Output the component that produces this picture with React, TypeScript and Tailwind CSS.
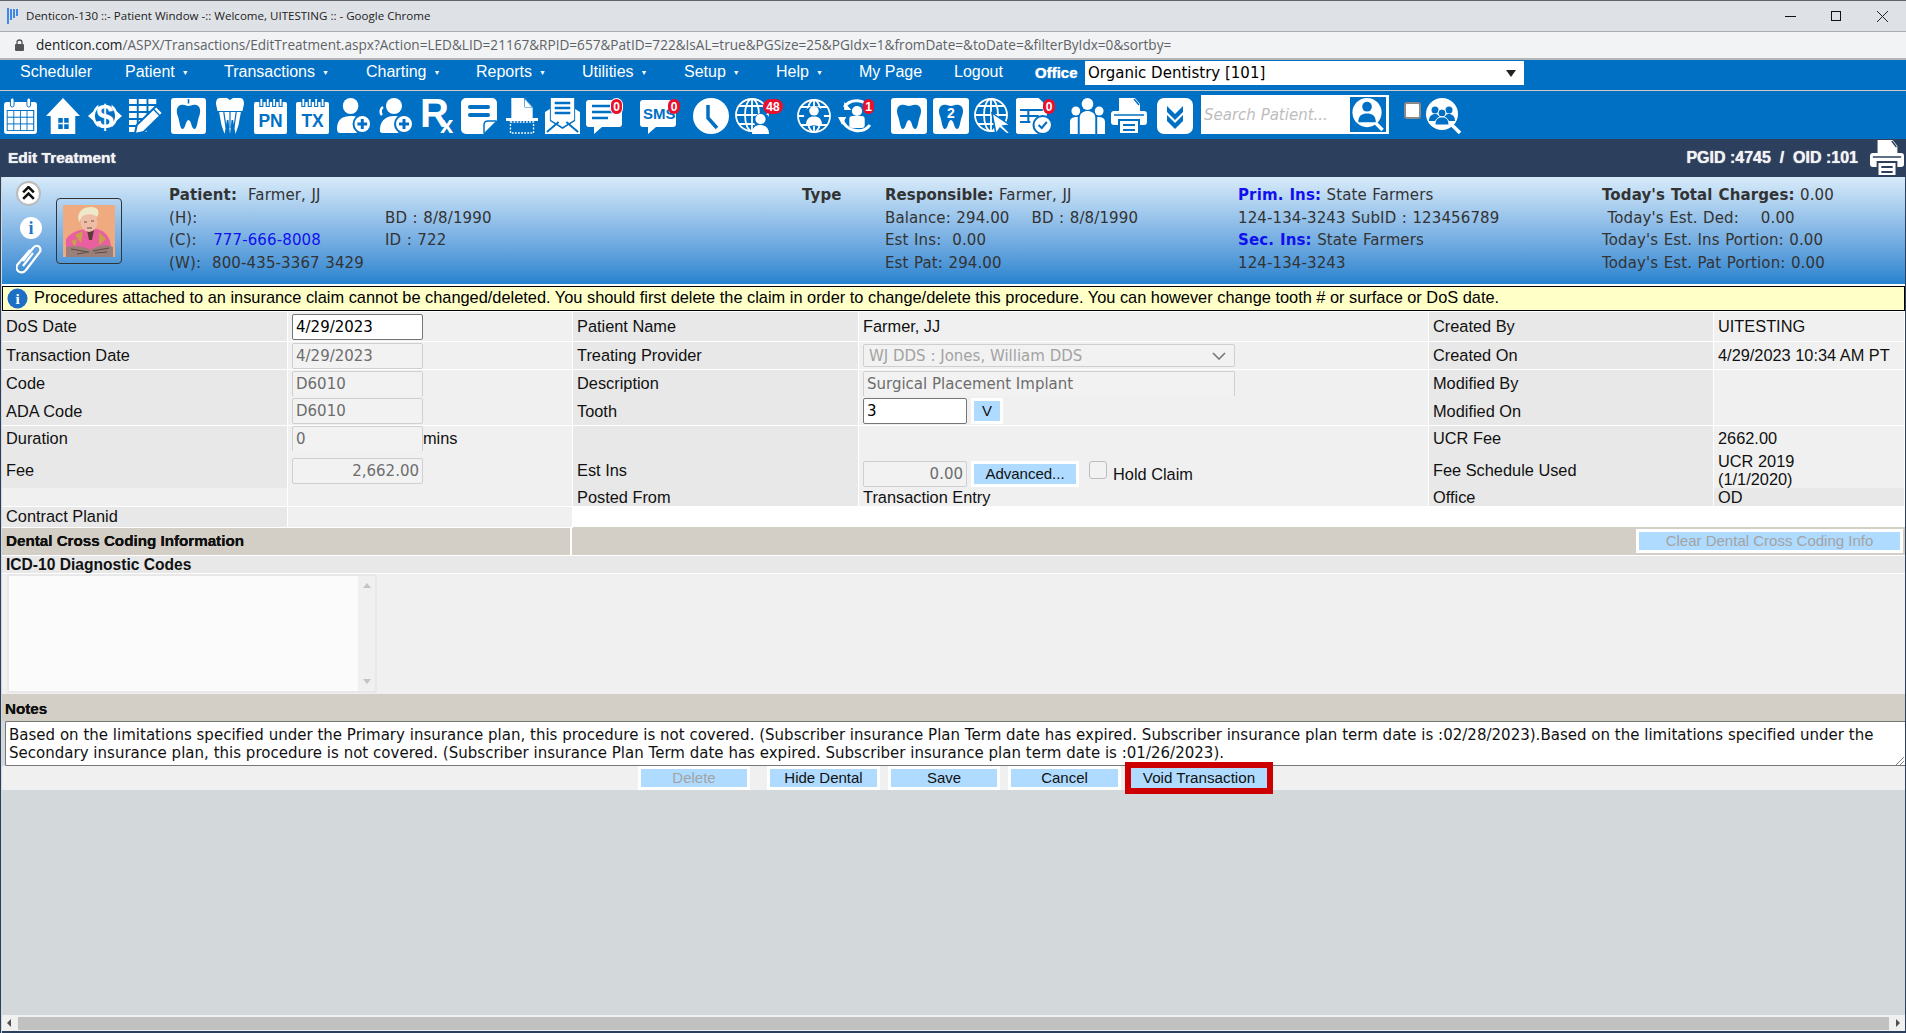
import React from "react";

const B = "#0070c5";
const W = "#ffffff";

function Ic({ className, children }: { className: string; children: React.ReactNode }) {
  return (
    <svg viewBox="0 0 36 36" preserveAspectRatio="none" className={"block h-[36px] shrink-0 " + className}>
      {children}
    </svg>
  );
}

function Badge({ children, className }: { children: React.ReactNode; className: string }) {
  return (
    <span className={"absolute top-[1px] flex h-[15px] items-center justify-center rounded-full bg-[#e8112d] text-[12px] font-bold leading-none text-white " + className}>
      {children}
    </span>
  );
}

const toothPath = "M10 7C14 6 16 8 18 8C20 8 22 6 26 7C30 8 31 13 29 18C27 23 27 31 24 31C21 31 21 22 18 22C15 22 15 31 12 31C9 31 9 23 7 18C5 13 6 8 10 7Z";
const bubble = "M3 2H33a3 3 0 0 1 3 3V26a3 3 0 0 1-3 3H16L8 36V29H3a3 3 0 0 1-3-3V5a3 3 0 0 1 3-3Z";

function GlobeLines() {
  return (
    <g fill="none" stroke={W} strokeWidth="1.8">
      <circle cx="17" cy="17" r="16" />
      <ellipse cx="17" cy="17" rx="7" ry="16" />
      <path d="M17 1V33M1 17H33M4 8H30M4 26H30" />
    </g>
  );
}

function Person({ x, y, s }: { x: number; y: number; s: number }) {
  return (
    <g transform={`translate(${x} ${y}) scale(${s})`}>
      <circle cx="10" cy="6" r="6" fill={W} />
      <path d="M0 24C0 16 4 13 10 13C16 13 20 16 20 24Z" fill={W} />
    </g>
  );
}

function PrinterIcon({ className, line }: { className: string; line: string }) {
  return (
    <Ic className={className}>
      <path d="M8 0H24L29 6V14H8Z" fill={W} />
      <path d="M23 1L28 7" stroke={line} strokeWidth="1.5" />
      <rect x="0" y="13" width="36" height="14" rx="3" fill={W} />
      <rect x="8" y="22" width="20" height="14" fill={W} stroke={line} strokeWidth="2" />
      <path d="M12 27H24M12 32H24" stroke={line} strokeWidth="2" />
      <path d="M3 17H33" stroke={line} strokeWidth="1.5" />
    </Ic>
  );
}

function Toolbar() {
  return (
    <div className="flex h-[48px] items-start bg-[#0070c5] pl-[4px] pt-[7px]">
      <Ic className="w-[33px]">
        <rect x="0" y="4" width="36" height="32" rx="3" fill={W} />
        <rect x="7" y="0" width="4" height="9" rx="2" fill={W} stroke={B} />
        <rect x="25" y="0" width="4" height="9" rx="2" fill={W} stroke={B} />
        <rect x="3" y="12" width="30" height="21" fill={B} />
        {[0, 1, 2, 3].map((c) => [0, 1, 2].map((r) => <rect key={c + "-" + r} x={4 + c * 7.2} y={13 + r * 6.7} width="6.2" height="5.7" fill={W} />))}
      </Ic>
      <Ic className="ml-[9px] w-[34px]">
        <path d="M18 0L36 18H31V36H5V18H0Z" fill={W} />
        <rect x="13" y="20" width="11" height="11" fill={B} />
        <path d="M18.5 20V31M13 25.5H24" stroke={W} strokeWidth="1.5" />
      </Ic>
      <Ic className="ml-[8px] w-[34px]">
        <circle cx="18" cy="18" r="12" fill="none" stroke={W} strokeWidth="2.5" />
        <path d="M0 18L6 13V23ZM36 18L30 13V23Z" fill={W} />
        <rect x="11" y="0" width="14" height="36" fill={B} />
        <text x="18" y="30" textAnchor="middle" fontSize="34" fontWeight="700" fill={W} fontFamily="Liberation Sans">$</text>
      </Ic>
      <Ic className="ml-[7px] w-[35px]">
        {[1, 8, 15, 22, 29].map((y, i) => (
          <g key={y} fill={W}>
            <rect x="0" y={y} width="8" height="5" />
            <rect x="10" y={y} width="8" height="5" />
            {i < 3 && <rect x="20" y={y} width="8" height="5" />}
          </g>
        ))}
        <path d="M6 36L8 27L28 8L35 15L15 34Z" fill={W} stroke={B} strokeWidth="2" />
        <path d="M25 11L32 18" stroke={B} strokeWidth="1.5" />
      </Ic>
      <Ic className="ml-[7px] w-[35px]">
        <rect x="0" y="0" width="36" height="36" rx="3" fill={W} />
        <path d="M17.2 1V5.5H18.8V1Z" fill={B} />
        <path d={toothPath} fill={B} />
      </Ic>
      <Ic className="ml-[10px] w-[28px]">
        <path d="M5 0H14L18 2L22 0H31C35 0 36 3 36 6L34 13H2L0 6C0 3 1 0 5 0Z" fill={W} />
        <path d="M4 14H32L29 27L25 36L22 22H20L18 36L16 22H14L11 36L7 27Z" fill={W} />
        <path d="M10 14L13 30M26 14L23 30M18 14V30" stroke={B} strokeWidth="1.5" />
      </Ic>
      {["PN", "TX"].map((t, i) => (
        <Ic key={t} className={i === 0 ? "ml-[10px] w-[33px]" : "ml-[9px] w-[33px]"}>
          <rect x="0" y="4" width="36" height="32" rx="2" fill={W} />
          <path d="M8 1V9M15 1V9M22 1V9M29 1V9" stroke={B} strokeWidth="4.5" />
          <path d="M8 1V8M15 1V8M22 1V8M29 1V8" stroke={W} strokeWidth="2" />
          <text x="18" y="29" textAnchor="middle" fontSize="19" fontWeight="700" fill={B} fontFamily="Liberation Sans">{t}</text>
        </Ic>
      ))}
      <Ic className="ml-[8px] w-[35px]">
        <circle cx="14" cy="8" r="8" fill={W} />
        <path d="M0 31C0 21 6 18 14 18C20 18 24 20 26 23L20 35H3C1 35 0 33 0 31Z" fill={W} />
        <circle cx="26" cy="26" r="9" fill={W} stroke={B} strokeWidth="2" />
        <path d="M26 21V31M21 26H31" stroke={B} strokeWidth="3" />
      </Ic>
      <Ic className="ml-[6px] w-[36px]">
        <circle cx="16" cy="8" r="8" fill={W} />
        <path d="M5 9C2 11 2 15 4 17" fill="none" stroke={W} strokeWidth="2.5" />
        <path d="M2 34C1 24 7 18 16 18C21 18 24 20 26 23L20 35H4Z" fill={W} />
        <circle cx="26" cy="26" r="9" fill={W} stroke={B} strokeWidth="2" />
        <path d="M26 21V31M21 26H31" stroke={B} strokeWidth="3" />
      </Ic>
      <svg viewBox="0 0 33 36" className="ml-[7px] block h-[36px] w-[33px] shrink-0 overflow-visible">
        <text x="-1" y="29" fontSize="40" fontWeight="700" fill={W} fontFamily="Liberation Sans">R</text>
        <text x="19" y="35" fontSize="24" fontWeight="700" fill={W} fontFamily="Liberation Sans">x</text>
      </svg>
      <Ic className="ml-[7px] w-[36px]">
        <path d="M5 0H31a5 5 0 0 1 5 5V22L22 36H5a5 5 0 0 1-5-5V5a5 5 0 0 1 5-5Z" fill={W} />
        <rect x="7" y="7" width="22" height="4" rx="2" fill={B} />
        <rect x="7" y="15" width="22" height="4" rx="2" fill={B} />
        <path d="M23 35V27C23 24 25 23 27 23H35" fill="none" stroke={B} strokeWidth="1.5" />
      </Ic>
      <Ic className="ml-[9px] w-[32px]">
        <path d="M6 0H21L30 9V20H6Z" fill={W} />
        <path d="M21 0V9H30" fill={B} stroke={B} strokeWidth="1" />
        <path d="M21 1L29 9H21Z" fill={W} />
        <path d="M0 20H36V23H0Z" fill={W} />
        <rect x="5" y="24" width="26" height="11" fill="none" stroke={W} strokeWidth="1.5" strokeDasharray="2 1.5" />
      </Ic>
      <Ic className="ml-[7px] w-[35px]">
        <path d="M6 0H30V22L18 29L6 22Z" fill={W} />
        <path d="M10 5H26M10 10H26M10 15H26" stroke={B} strokeWidth="2.5" />
        <path d="M0 14L5 11V23L18 31L31 23V11L36 14V36H0Z" fill={W} />
        <path d="M2 34L14 24M34 34L22 24" stroke={B} strokeWidth="2" />
      </Ic>
      <div className="relative ml-[6px] w-[36px] shrink-0">
        <Ic className="w-[36px]">
          <path d={bubble} fill={W} />
          <path d="M6 8H28M6 14H28M6 20H22" stroke={B} strokeWidth="2.5" />
        </Ic>
        <Badge className="left-[25px] w-[11px] ring-1 ring-white">0</Badge>
      </div>
      <div className="relative ml-[18px] w-[36px] shrink-0">
        <svg viewBox="0 0 36 36" className="block h-[36px] w-[36px]">
          <path d={bubble} fill={W} />
          <text x="3" y="21" fontSize="15" fontWeight="700" fill={B} fontFamily="Liberation Sans">SMS</text>
        </svg>
        <Badge className="left-[28px] w-[12px]">0</Badge>
      </div>
      <Ic className="ml-[17px] w-[36px]">
        <circle cx="18" cy="18" r="18" fill={W} />
        <path d="M15 7V20L24 30" fill="none" stroke={B} strokeWidth="3.5" />
      </Ic>
      <div className="relative ml-[6px] w-[36px] shrink-0">
        <Ic className="w-[36px]">
          <GlobeLines />
          <circle cx="27" cy="23" r="8" fill={B} />
          <Person x={17} y={16} s={0.85} />
        </Ic>
        <Badge className="left-[28px] w-[20px]">48</Badge>
      </div>
      <Ic className="ml-[25px] w-[36px]">
        <g transform="translate(1 1)"><GlobeLines /></g>
        <circle cx="18" cy="18" r="10" fill={B} />
        <Person x={10} y={8} s={0.8} />
      </Ic>
      <div className="relative ml-[6px] w-[37px] shrink-0">
        <Ic className="w-[37px]">
          <path d="M31 10C26 1 12 0 6 9M4 21C7 33 24 37 31 27" fill="none" stroke={W} strokeWidth="3" />
          <path d="M0 19L8 19L4 27ZM6 4V12H13Z" fill={W} />
          <rect x="11" y="18" width="15" height="12" rx="3" fill={W} />
          <circle cx="18.5" cy="13" r="5" fill={W} />
        </Ic>
        <Badge className="left-[25px] w-[11px]">1</Badge>
      </div>
      <Ic className="ml-[16px] w-[36px]">
        <rect x="0" y="0" width="36" height="36" rx="3" fill={W} />
        <path d={toothPath} fill={B} />
      </Ic>
      <svg viewBox="0 0 36 36" className="ml-[6px] block h-[36px] w-[36px] shrink-0">
        <rect x="0" y="0" width="36" height="36" rx="3" fill={W} />
        <path d={toothPath} fill={B} />
        <text x="18" y="20" textAnchor="middle" fontSize="14" fontWeight="700" fill={W} fontFamily="Liberation Sans">2</text>
      </svg>
      <Ic className="ml-[5px] w-[36px]">
        <GlobeLines />
        <path d="M18 15L36 27L29 28L36 35L33 36L26 30L22 36Z" fill={W} stroke={B} strokeWidth="1.5" />
      </Ic>
      <div className="relative ml-[6px] w-[37px] shrink-0">
        <Ic className="w-[37px]">
          <path d="M2 0H22L30 8V20H24V36H2C1 36 0 35 0 34V2C0 1 1 0 2 0Z" fill={W} />
          <path d="M4 12H26M4 18H22M4 24H14M12 12V24" stroke={B} strokeWidth="2" />
          <circle cx="26" cy="27" r="9" fill={W} stroke={B} strokeWidth="2" />
          <path d="M22 27L25 30L30 24" fill="none" stroke={B} strokeWidth="2" />
        </Ic>
        <Badge className="left-[27px] w-[12px]">0</Badge>
      </div>
      <Ic className="ml-[17px] w-[35px]">
        <circle cx="18" cy="6" r="6" fill={W} />
        <circle cx="6" cy="13" r="4.5" fill={W} />
        <circle cx="30" cy="13" r="4.5" fill={W} />
        <path d="M10 36V20C10 15 14 13 18 13C22 13 26 15 26 20V36Z" fill={W} />
        <path d="M0 36V24C0 20 3 19 8 19V36ZM28 19C33 19 36 20 36 24V36H28Z" fill={W} />
      </Ic>
      <PrinterIcon className="ml-[6px] w-[36px]" line={B} />
      <Ic className="ml-[10px] w-[36px]">
        <rect x="0" y="0" width="36" height="36" rx="7" fill={W} />
        <path d="M10 8L18 16L26 8V14L18 22L10 14ZM10 17L18 25L26 17V23L18 31L10 23Z" fill={B} />
      </Ic>
      <div className="ml-[8px] flex h-[39px] w-[188px] -translate-y-[3px] items-center bg-white pr-[3px]">
        <span className="flex-1 pl-[3px] pt-[2px] text-[15px] italic text-[#bdbdbd] [font-family:'DejaVu_Sans',sans-serif]">Search Patient...</span>
        <svg viewBox="0 0 36 36" className="h-[35px] w-[36px] bg-[#0070c5]">
          <circle cx="17" cy="16" r="15" fill={W} />
          <path d="M26 27L33 34" stroke={W} strokeWidth="3.5" />
          <circle cx="17" cy="10" r="5" fill={B} />
          <path d="M8 26C8 19 12 17 17 17C22 17 26 19 26 26Z" fill={B} />
        </svg>
      </div>
      <span className="ml-[15px] mt-[4px] h-[17px] w-[17px] rounded-[3px] border-2 border-[#8a8a8a] bg-white" />
      <svg viewBox="0 0 36 36" className="ml-[5px] h-[36px] w-[36px]">
        <circle cx="16" cy="16" r="16" fill={W} />
        <path d="M26 27L34 35" stroke={W} strokeWidth="3.5" />
        <circle cx="9" cy="12" r="3.5" fill={B} />
        <circle cx="23" cy="12" r="3.5" fill={B} />
        <path d="M3 23C3 18 6 16 9 16C12 16 15 18 15 23ZM17 23C17 18 20 16 23 16C26 16 29 18 29 23Z" fill={B} />
        <circle cx="16" cy="15" r="4" fill={B} stroke={W} />
        <path d="M9 27C9 21 12 19 16 19C20 19 23 21 23 27Z" fill={B} stroke={W} />
      </svg>
    </div>
  );
}

const navItems = [
  { t: "Scheduler", w: "w-[105px]", c: false },
  { t: "Patient", w: "w-[99px]", c: true },
  { t: "Transactions", w: "w-[142px]", c: true },
  { t: "Charting", w: "w-[110px]", c: true },
  { t: "Reports", w: "w-[106px]", c: true },
  { t: "Utilities", w: "w-[102px]", c: true },
  { t: "Setup", w: "w-[92px]", c: true },
  { t: "Help", w: "w-[83px]", c: true },
  { t: "My Page", w: "w-[95px]", c: false },
  { t: "Logout", w: "w-[81px]", c: false },
];

function Nav() {
  return (
    <div className="flex h-[31px] items-start border-b border-[#c9c9c9] bg-[#0070c5] pl-[20px] text-[16px] text-white">
      {navItems.map((n) => (
        <div key={n.t} className={"flex h-[24px] shrink-0 items-center " + n.w}>
          <span>{n.t}</span>
          {n.c && <span className="ml-[7px] text-[7px] leading-none">▼</span>}
        </div>
      ))}
      <div className="flex h-[26px] w-[50px] shrink-0 items-center text-[15px] font-bold [text-shadow:0_0_1px_#fff]">Office</div>
      <div className="mt-[1px] flex h-[24px] w-[439px] shrink-0 items-center justify-between bg-white pl-[3px] pr-[6px] text-[15px] text-black [font-family:'DejaVu_Sans',sans-serif]">
        <span className="pt-[1px]">Organic Dentistry [101]</span>
        <span className="mr-[2px] h-0 w-0 border-x-[5px] border-t-[7px] border-x-transparent border-t-[#222]" />
      </div>
    </div>
  );
}

function PatientPanel() {
  const line = "h-[22.6px] whitespace-pre";
  return (
    <div className="flex h-[107px] rounded-tl-[4px] bg-gradient-to-b from-[#d8ebf9] to-[#2583cf] text-[15px] leading-[22.6px] tracking-[0.12px] text-[#333] [word-spacing:0.6px] [font-family:'DejaVu_Sans',sans-serif]">
      <div className="flex w-[54px] shrink-0 flex-col items-start pl-[14px] pt-[4px]">
        <span className="flex h-[25px] w-[25px] items-center justify-center rounded-full border-2 border-[#bbb] bg-white">
          <svg viewBox="0 0 14 14" className="h-[15px] w-[15px]"><path d="M2 6L7 1L12 6M2 12L7 7L12 12" fill="none" stroke="#111" strokeWidth="2.4" /></svg>
        </span>
        <span className="ml-[4px] mt-[11px] flex h-[22px] w-[22px] items-center justify-center rounded-full bg-white text-[18px] font-bold leading-none text-[#1c78c8] [font-family:'Liberation_Serif',serif]">i</span>
        <svg viewBox="0 0 26 30" className="mt-[5px] h-[30px] w-[26px]">
          <path d="M7 17L17 4C19 1 23 1 24 4C25 6 24 8 23 9L10 26C8 29 4 29 2 27C0 25 0 22 2 20L14 6M17 9L7 22" fill="none" stroke="#fff" strokeWidth="2.2" />
        </svg>
      </div>
      <div className="mt-[21px] flex h-[66px] w-[66px] shrink-0 items-center justify-center rounded-[4px] border border-[#333]">
        <svg viewBox="0 0 52 52" className="h-[52px] w-[52px]">
          <rect width="52" height="52" fill="#efab7f" />
          <path d="M3 52V34C8 27 16 25 22 24H34C40 26 44 28 47 36L50 52Z" fill="#ea5f9f" />
          <path d="M12 30L20 26L18 38ZM36 27L43 34L36 40ZM8 36L14 34L12 42Z" fill="#c9a04a" />
          <path d="M24 25H31L29 35H26Z" fill="#5a3a34" />
          <path d="M3 42C12 40 24 42 27 45C32 42 42 38 50 42V52H3Z" fill="#9a8078" />
          <path d="M8 44L25 47M30 46L46 43M14 49L26 47M32 48L44 47" stroke="#5e4a48" strokeWidth="1.2" />
          <ellipse cx="26" cy="17" rx="8.5" ry="10" fill="#eebda8" />
          <path d="M16 17C13 8 19 2 28 2C36 2 37 8 34 12C30 8 23 9 20 11C18 12 18 15 16 17Z" fill="#efe8c9" />
          <path d="M21 17H24M28 16H31M24 23H29" stroke="#7a4a40" strokeWidth="1" />
        </svg>
      </div>
      <div className="w-[47px] shrink-0" />
      <div className="w-[216px] shrink-0 pt-[7px]">
        <div className={line}><b>Patient:</b>  Farmer, JJ</div>
        <div className={line}>(H):</div>
        <div className={line}>(C):   <span className="text-[#1010ee]">777-666-8008</span></div>
        <div className={line}>(W):  800-435-3367 3429</div>
      </div>
      <div className="w-[417px] shrink-0 pt-[7px]">
        <div className={line}> </div>
        <div className={line}>BD : 8/8/1990</div>
        <div className={line}>ID : 722</div>
      </div>
      <div className="w-[83px] shrink-0 pt-[7px]"><b>Type</b></div>
      <div className="w-[353px] shrink-0 pt-[7px]">
        <div className={line}><b className="tracking-normal">Responsible:</b> Farmer, JJ</div>
        <div className={line}>Balance: 294.00    BD : 8/8/1990</div>
        <div className={line}>Est Ins:  0.00</div>
        <div className={line}>Est Pat: 294.00</div>
      </div>
      <div className="w-[364px] shrink-0 pt-[7px]">
        <div className={line}><b className="text-[#1010ee]">Prim. Ins:</b> State Farmers</div>
        <div className={line}>124-134-3243 SubID : 123456789</div>
        <div className={line}><b className="text-[#1010ee]">Sec. Ins:</b> State Farmers</div>
        <div className={line}>124-134-3243</div>
      </div>
      <div className="flex-1 pt-[7px]">
        <div className={line}><b>Today's Total Charges:</b> 0.00</div>
        <div className={line}> Today's Est. Ded:    0.00</div>
        <div className={line}>Today's Est. Ins Portion: 0.00</div>
        <div className={line}>Today's Est. Pat Portion: 0.00</div>
      </div>
    </div>
  );
}

const cL = "flex items-center border-r border-b border-white bg-[#e8e8e8] px-[4px] leading-[18px]";
const cV = "flex items-center border-r border-b border-white bg-[#f0f0f0] px-[4px] leading-[18px]";
const cols = "grid grid-cols-[286px_285px_286px_570px_285px_1fr] grid-rows-[1fr]";
const dj = "[font-family:'DejaVu_Sans',sans-serif]";
const inOff = "h-[26px] rounded-[2px] border border-[#cfcfcf] bg-[#f2f2f2] px-[3px] text-[15px] text-[#6d6d6d] outline-none " + dj;
const inOn = "h-[26px] rounded-[2px] border border-[#767676] bg-white px-[3px] text-[15px] text-black outline-none " + dj;
const btn = "flex shrink-0 items-center justify-center border-[3px] border-white bg-[#aedbff] text-[15px] text-[#111]";

function T({ children }: { children: React.ReactNode }) {
  return <span className="mb-[2px]">{children}</span>;
}

function Row({ h, cells }: { h: string; cells: React.ReactNode[] }) {
  return (
    <div className={cols + " " + h}>
      <div className={cL}>{cells[0]}</div>
      <div className={cV}>{cells[1]}</div>
      <div className={cL}>{cells[2]}</div>
      <div className={cV}>{cells[3]}</div>
      <div className={cL}>{cells[4]}</div>
      <div className={cV}>{cells[5]}</div>
    </div>
  );
}

function Table() {
  return (
    <div className="bg-white text-[16.35px]">
      <Row h="h-[30px]" cells={[<T key="1">DoS Date</T>, <input key="a" readOnly value="4/29/2023" className={inOn + " w-[131px]"} />, <T key="2">Patient Name</T>, <T key="3">Farmer, JJ</T>, <T key="4">Created By</T>, <T key="5">UITESTING</T>]} />
      <Row h="h-[28px]" cells={[<T key="1">Transaction Date</T>, <input key="a" readOnly disabled value="4/29/2023" className={inOff + " w-[131px]"} />, <T key="2">Treating Provider</T>,
        <div key="b" className={"flex h-[23px] w-[372px] items-center justify-between rounded-[2px] border border-[#cfcfcf] bg-[#f2f2f2] px-[5px] text-[15px] text-[#a3a3a3] " + dj}>
          <span className="pt-[1px]">WJ DDS : Jones, William DDS</span>
          <svg viewBox="0 0 14 8" className="mr-[3px] h-[8px] w-[14px]"><path d="M1 1L7 7L13 1" fill="none" stroke="#777" strokeWidth="1.6" /></svg>
        </div>, <T key="4">Created On</T>, <T key="5">4/29/2023 10:34 AM PT</T>]} />
      <Row h="h-[26px] [&>div]:pt-[1px]" cells={[<T key="1">Code</T>, <input key="a" readOnly disabled value="D6010" className={inOff + " h-[25px] w-[131px]"} />, <T key="2">Description</T>,
        <input key="b" readOnly disabled value="Surgical Placement Implant" className={inOff + " h-[25px] w-[372px]"} />, <T key="4">Modified By</T>, ""]} />
      <Row h="h-[30px]" cells={["ADA Code", <input key="a" readOnly disabled value="D6010" className={inOff + " h-[25px] w-[131px]"} />, "Tooth",
        <div key="b" className="flex items-center gap-[4px]">
          <input readOnly value="3" className={inOn + " w-[104px]"} />
          <span className={btn + " h-[26px] w-[32px]"}>V</span>
        </div>, "Modified On", ""]} />
      <Row h="h-[25px]" cells={[<T key="1">Duration</T>,
        <div key="a" className="flex items-center">
          <input readOnly disabled value="0" className={inOff + " h-[24px] w-[131px]"} />
          <T>mins</T>
        </div>, "", "", <T key="4">UCR Fee</T>, <T key="5">2662.00</T>]} />
      <Row h="h-[37px] [&>div]:pt-[1px]" cells={[<T key="1">Fee</T>, <input key="a" readOnly disabled value="2,662.00" className={inOff + " w-[131px] text-right"} />, <T key="2">Est Ins</T>,
        <div key="b" className="flex items-center gap-[4px] pt-[5px]">
          <input readOnly disabled value="0.00" className={inOff + " w-[104px] text-right"} />
          <span className={btn + " h-[26px] w-[108px]"}>Advanced...</span>
          <span className="mb-[8px] ml-[6px] h-[18px] w-[18px] rounded-[3px] border border-[#bdbdbd] bg-[#f2f2f2]" />
          <span className="ml-[2px]">Hold Claim</span>
        </div>, <T key="4">Fee Schedule Used</T>, <div key="c" className="mb-[2px] leading-[18px]">UCR 2019<br />(1/1/2020)</div>]} />
      <div className={cols + " h-[19px]"}>
        <div className={cV} />
        <div className={cV} />
        <div className={cL}>Posted From</div>
        <div className={cV}>Transaction Entry</div>
        <div className={cL}>Office</div>
        <div className={cL}>OD</div>
      </div>
      <div className={cols + " h-[20px]"}>
        <div className={cL}><T>Contract Planid</T></div>
        <div className={cV} />
      </div>
      <div className="flex h-[28px] bg-[#d3cec6] text-[15.2px] font-bold">
        <div className="flex w-[570px] items-center border-r-2 border-white px-[4px] [text-shadow:0_0_0.5px_#000]">Dental Cross Coding Information</div>
        <div className="flex flex-1 items-center justify-end pr-[2px]">
          <span className={btn + " h-[24px] w-[267px] font-normal text-[#a3a3a3]"}>Clear Dental Cross Coding Info</span>
        </div>
      </div>
      <div className="flex h-[19px] items-center border-b border-t border-white bg-[#e8e8e8] px-[4px] text-[15.6px] font-bold">ICD-10 Diagnostic Codes</div>
    </div>
  );
}

function Notes() {
  return (
    <div>
      <div className="flex h-[120px] items-start bg-[#f0f0f0] pl-[5px]">
        <div className="flex h-[119px] w-[370px] rounded-[2px] border-2 border-[#e8e8e8] bg-[#fbfbfb]">
          <div className="flex-1" />
          <div className="flex w-[17px] flex-col items-center justify-between bg-[#f0f0f0] py-[7px]">
            <span className="h-0 w-0 border-x-[4px] border-b-[5px] border-x-transparent border-b-[#c4c4c4]" />
            <span className="h-0 w-0 border-x-[4px] border-t-[5px] border-x-transparent border-t-[#c4c4c4]" />
          </div>
        </div>
      </div>
      <div className="flex h-[27px] items-center bg-[#d3cec6] px-[3px] pt-[4px] text-[15.2px] font-bold [text-shadow:0_0_0.5px_#000]">Notes</div>
      <div className={"relative ml-[3px] h-[45px] whitespace-pre rounded-l-[2px] border border-r-0 border-[#767676] bg-white px-[3px] pt-[4px] text-[15px] leading-[18px] tracking-[0.015px] text-[#111] " + dj}>
        {"Based on the limitations specified under the Primary insurance plan, this procedure is not covered. (Subscriber insurance Plan Term date has expired. Subscriber insurance plan term date is :02/28/2023).Based on the limitations specified under the\nSecondary insurance plan, this procedure is not covered. (Subscriber insurance Plan Term date has expired. Subscriber insurance plan term date is :01/26/2023)."}
        <svg viewBox="0 0 8 8" className="absolute bottom-0 right-[1px] h-[8px] w-[8px]"><path d="M0 8L8 0M4 8L8 4" stroke="#888" strokeWidth="1" /></svg>
      </div>
      <div className="flex h-[24px] items-start bg-[#f0f0f0] pl-[636px]">
        <span className={btn + " h-[24px] w-[112px] text-[#a3a3a3]"}>Delete</span>
        <span className={btn + " ml-[17px] h-[24px] w-[113px]"}>Hide Dental</span>
        <span className={btn + " ml-[8px] h-[24px] w-[112px]"}>Save</span>
        <span className={btn + " ml-[8px] h-[24px] w-[113px]"}>Cancel</span>
        <span className="relative z-10 ml-[4px] -mt-[4px] flex h-[32px] w-[148px] shrink-0 items-center justify-center border-[6px] border-[#cc0000] bg-[#aedbff] text-[15.2px] text-[#111]">Void Transaction</span>
      </div>
    </div>
  );
}

export default function App() {
  return (
    <div className="flex h-[1033px] w-[1906px] flex-col overflow-hidden bg-white text-[16px] text-[#111] [font-family:'Liberation_Sans',Arial,sans-serif]">
      <div className="flex h-[32px] shrink-0 items-center border-y border-t-[#5f6368] border-b-[#a9acb0] bg-[#dee1e6] pl-[7px] text-[11.55px] text-[#222] [font-family:'Open_Sans',sans-serif]">
        <svg viewBox="0 0 12 16" className="h-[16px] w-[12px]"><path d="M1 0V16M4 1V12M7 1V10M10 1V8" stroke="#1a73e8" strokeWidth="1.6" /></svg>
        <span className="ml-[7px] flex-1">Denticon-130 ::- Patient Window -:: Welcome, UITESTING :: - Google Chrome</span>
        <svg viewBox="0 0 11 1" className="mr-[35px] h-[1px] w-[11px]"><rect width="11" height="1" fill="#111" /></svg>
        <span className="mr-[36px] h-[10px] w-[10px] border border-[#111]" />
        <svg viewBox="0 0 11 11" className="mr-[18px] h-[11px] w-[11px]"><path d="M0 0L11 11M11 0L0 11" stroke="#222" strokeWidth="1" /></svg>
      </div>
      <div className="flex h-[28px] shrink-0 items-center border-b-2 border-[#b5b5b5] bg-[#f1f3f4] pl-[15px] text-[13.6px] text-[#5f6368] [font-family:'Open_Sans',sans-serif]">
        <svg viewBox="0 0 9 12" className="h-[12px] w-[9px]"><path d="M2 5V3.5a2.5 2.5 0 0 1 5 0V5" fill="none" stroke="#555" strokeWidth="1.3" /><rect y="5" width="9" height="7" rx="1" fill="#555" /></svg>
        <span className="ml-[12px]"><span className="text-[#202124]">denticon.com</span>/ASPX/Transactions/EditTreatment.aspx?Action=LED&amp;LID=21167&amp;RPID=657&amp;PatID=722&amp;IsAL=true&amp;PGSize=25&amp;PGIdx=1&amp;fromDate=&amp;toDate=&amp;filterByIdx=0&amp;sortby=</span>
      </div>
      <Nav />
      <Toolbar />
      <div className="flex h-[38px] shrink-0 items-center justify-between bg-[#2c405e] pl-[8px] pr-[2px] font-bold text-[#f2f2f2]">
        <span className="text-[15.5px] [text-shadow:0_0_1px_#fff]">Edit Treatment</span>
        <div className="flex items-center">
          <span className="whitespace-pre [text-shadow:0_0_1px_#fff]">PGID :4745  /  OID :101</span>
          <PrinterIcon className="ml-[12px] w-[34px]" line="#2c405e" />
        </div>
      </div>
      <div className="flex min-h-0 flex-1 flex-col border-x border-[#2c405e] bg-[#d3d8da] pl-[1px]">
        <div className="border-b-2 border-white"><PatientPanel /></div>
        <div className="flex h-[25px] shrink-0 items-center border border-black bg-[#ffffc8] pl-[4px] text-[16.37px] text-black">
          <svg viewBox="0 0 22 22" className="h-[21px] w-[21px]">
            <circle cx="11" cy="11" r="10.5" fill="#1c6fc4" />
            <text x="11" y="17" textAnchor="middle" fontSize="16" fontWeight="700" fill="#fff" fontFamily="Liberation Serif">i</text>
          </svg>
          <span className="mb-[2px] ml-[6px]">Procedures attached to an insurance claim cannot be changed/deleted. You should first delete the claim in order to change/delete this procedure. You can however change tooth # or surface or DoS date.</span>
        </div>
        <div className="h-[1px] shrink-0 bg-white" />
        <Table />
        <Notes />
        <div className="flex-1" />
        <div className="flex h-[16px] shrink-0 items-center bg-[#f0f0f0]">
          <span className="ml-[5px] h-0 w-0 border-y-[4px] border-r-[4px] border-y-transparent border-r-[#505050]" />
          <div className="mx-[7px] h-[13px] flex-1 bg-[#c1c1c1]" />
          <span className="mr-[5px] h-0 w-0 border-y-[4px] border-l-[4px] border-y-transparent border-l-[#505050]" />
        </div>
        <div className="h-[2px] shrink-0 bg-[#2c405e]" />
      </div>
    </div>
  );
}
